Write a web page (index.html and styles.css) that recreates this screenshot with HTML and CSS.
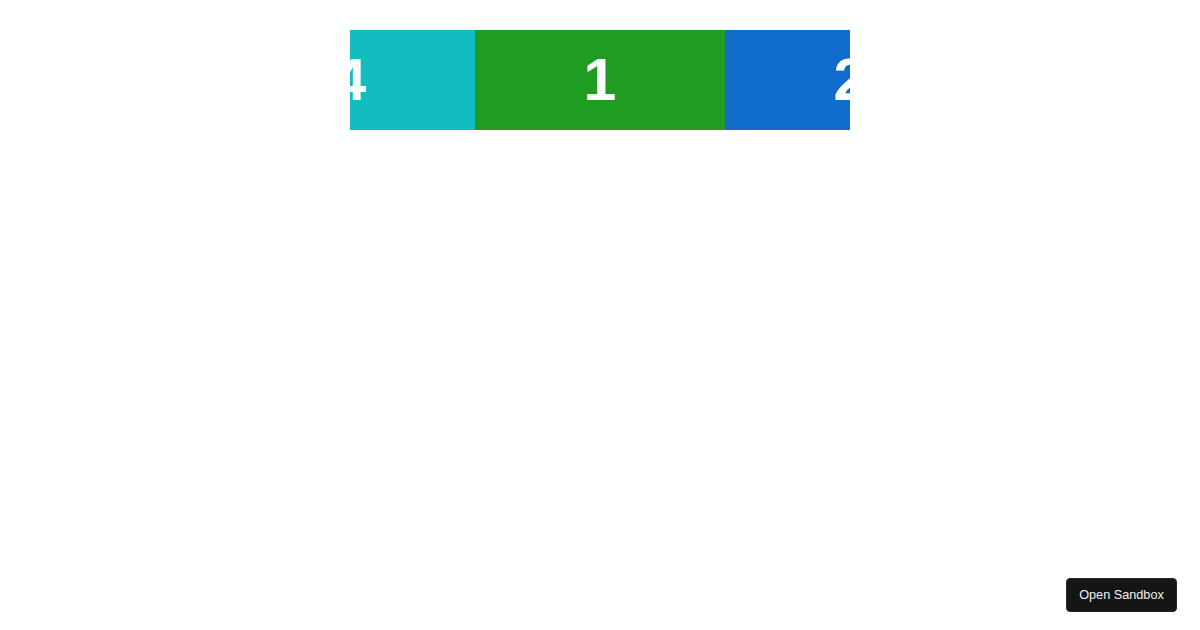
FILE: index.html
```html
<!DOCTYPE html>
<html>
<head>
<meta charset="utf-8">
<link rel="stylesheet" href="styles.css">
</head>
<body>
<div class="carousel">
  <div class="track">
    <div class="slide cyan">4</div>
    <div class="slide green">1</div>
    <div class="slide blue">2</div>
  </div>
</div>
<button class="sandbox">Open Sandbox</button>
</body>
</html>
```
FILE: styles.css
```css
html, body {
  margin: 0;
  padding: 0;
  background: #fff;
  width: 1200px;
  height: 630px;
  overflow: hidden;
  font-family: "Liberation Sans", Arial, sans-serif;
}
.carousel {
  width: 500px;
  height: 100px;
  margin: 30px auto 0;
  overflow: hidden;
}
.track {
  display: flex;
  margin-left: -125px;
}
.slide {
  flex: 0 0 250px;
  height: 100px;
  line-height: 100px;
  text-align: center;
  color: #fff;
  font-weight: bold;
  font-size: 59px;
}
.cyan { background: #12bdc0; }
.green { background: #219c23; }
.blue { background: #0f6ccb; }
.sandbox {
  position: fixed;
  right: 23px;
  bottom: 18px;
  width: 111px;
  height: 34px;
  background: #151515;
  color: #f2f2f2;
  border: 1px solid #2b2622;
  border-radius: 4px;
  font-family: "Liberation Sans", Arial, sans-serif;
  font-size: 12.7px;
  padding: 0;
}
```
